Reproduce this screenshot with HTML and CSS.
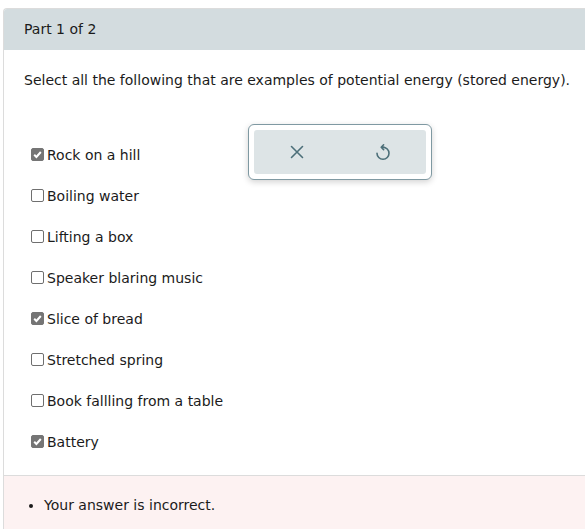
FILE: index.html
```html
<!DOCTYPE html>
<html>
<head>
<meta charset="utf-8">
<link rel="stylesheet" href="styles.css">
</head>
<body>
<div class="card">
  <div class="card-header">Part 1 of 2</div>
  <div class="card-body">
    <p class="question">Select all the following that are examples of potential energy (stored energy).</p>
    <ul class="options">
      <li class="option"><span class="box checked"><svg width="11" height="11" viewBox="0 0 11 11"><path d="M2.2 5.8 L4.4 8 L8.8 3" stroke="#fff" stroke-width="2" fill="none"/></svg></span>Rock on a hill</li>
      <li class="option"><span class="box"></span>Boiling water</li>
      <li class="option"><span class="box"></span>Lifting a box</li>
      <li class="option"><span class="box"></span>Speaker blaring music</li>
      <li class="option"><span class="box checked"><svg width="11" height="11" viewBox="0 0 11 11"><path d="M2.2 5.8 L4.4 8 L8.8 3" stroke="#fff" stroke-width="2" fill="none"/></svg></span>Slice of bread</li>
      <li class="option"><span class="box"></span>Stretched spring</li>
      <li class="option"><span class="box"></span>Book fallling from a table</li>
      <li class="option"><span class="box checked"><svg width="11" height="11" viewBox="0 0 11 11"><path d="M2.2 5.8 L4.4 8 L8.8 3" stroke="#fff" stroke-width="2" fill="none"/></svg></span>Battery</li>
    </ul>
  </div>
  <div class="feedback">
    <ul class="feedback-list">
      <li>Your answer is incorrect.</li>
    </ul>
  </div>
</div>
<div class="toolbar">
  <div class="toolbar-inner">
    <button class="tool-btn" aria-label="Close">
      <svg width="16" height="16" viewBox="0 0 16 16"><path d="M2.5 2.5 L13.5 13.5 M13.5 2.5 L2.5 13.5" stroke="#4c6f79" stroke-width="1.6" fill="none" stroke-linecap="round"/></svg>
    </button>
    <button class="tool-btn" aria-label="Reset">
      <svg width="18" height="18" viewBox="0 0 18 18"><path d="M9 4.2 A6 6 0 1 1 3 10.2" stroke="#4c6f79" stroke-width="1.6" fill="none" stroke-linecap="round"/><path d="M10 4.2 H7.5 M9.6 1.8 L7.2 4.2 L9.6 6.6" stroke="#4c6f79" stroke-width="1.6" fill="none" stroke-linecap="round" stroke-linejoin="round"/></svg>
    </button>
  </div>
</div>
</body>
</html>
```
FILE: styles.css
```css
html, body {
  margin: 0;
  padding: 0;
  overflow: hidden;
  background: #fff;
  height: 100%;
}
body {
  font-family: "DejaVu Sans", Verdana, sans-serif;
  font-size: 14px;
  color: #1b1b1b;
  padding: 8px 0 0 3px;
  box-sizing: border-box;
}
.card {
  border: 1px solid #dcdcdc;
  border-right: none;
  border-bottom: none;
  border-radius: 4px 0 0 0;
  height: 100%;
  box-sizing: border-box;
  overflow: hidden;
}
.card-header {
  background: #d3dcdf;
  height: 41px;
  line-height: 41px;
  padding: 0 20px;
}
.card-body {
  padding: 20px 20px 13px 20px;
}
.question {
  margin: 0;
  line-height: 20px;
  white-space: nowrap;
}
.options {
  list-style: none;
  margin: 44px 0 0 0;
  padding: 0 0 0 3px;
}
.option {
  height: 41px;
  display: flex;
  align-items: center;
}
.box {
  box-sizing: border-box;
  width: 13px;
  height: 13px;
  margin: 0 3px 0 4px;
  border: 1px solid #6f6f6f;
  border-radius: 2px;
  background: #fff;
  display: flex;
  align-items: center;
  justify-content: center;
}
.box.checked {
  background: #757575;
  border-color: #757575;
}
.feedback {
  background: #fdf2f2;
  border-top: 1px solid #dcdcdc;
  padding: 19px 20px 20px 20px;
  height: 100%;
}
.feedback-list {
  margin: 0;
  padding: 0 0 0 20px;
  line-height: 20px;
}
.toolbar {
  position: absolute;
  left: 248px;
  top: 124px;
  width: 172px;
  padding: 5px;
  background: #fff;
  border: 1px solid #7f99a2;
  border-radius: 6px;
  box-shadow: 0 2px 6px rgba(0, 0, 0, 0.18);
}
.toolbar-inner {
  display: flex;
  background: #dde4e6;
  border-radius: 3px;
  height: 44px;
}
.tool-btn {
  flex: 1;
  border: none;
  background: transparent;
  padding: 0;
  display: flex;
  align-items: center;
  justify-content: center;
}
```
